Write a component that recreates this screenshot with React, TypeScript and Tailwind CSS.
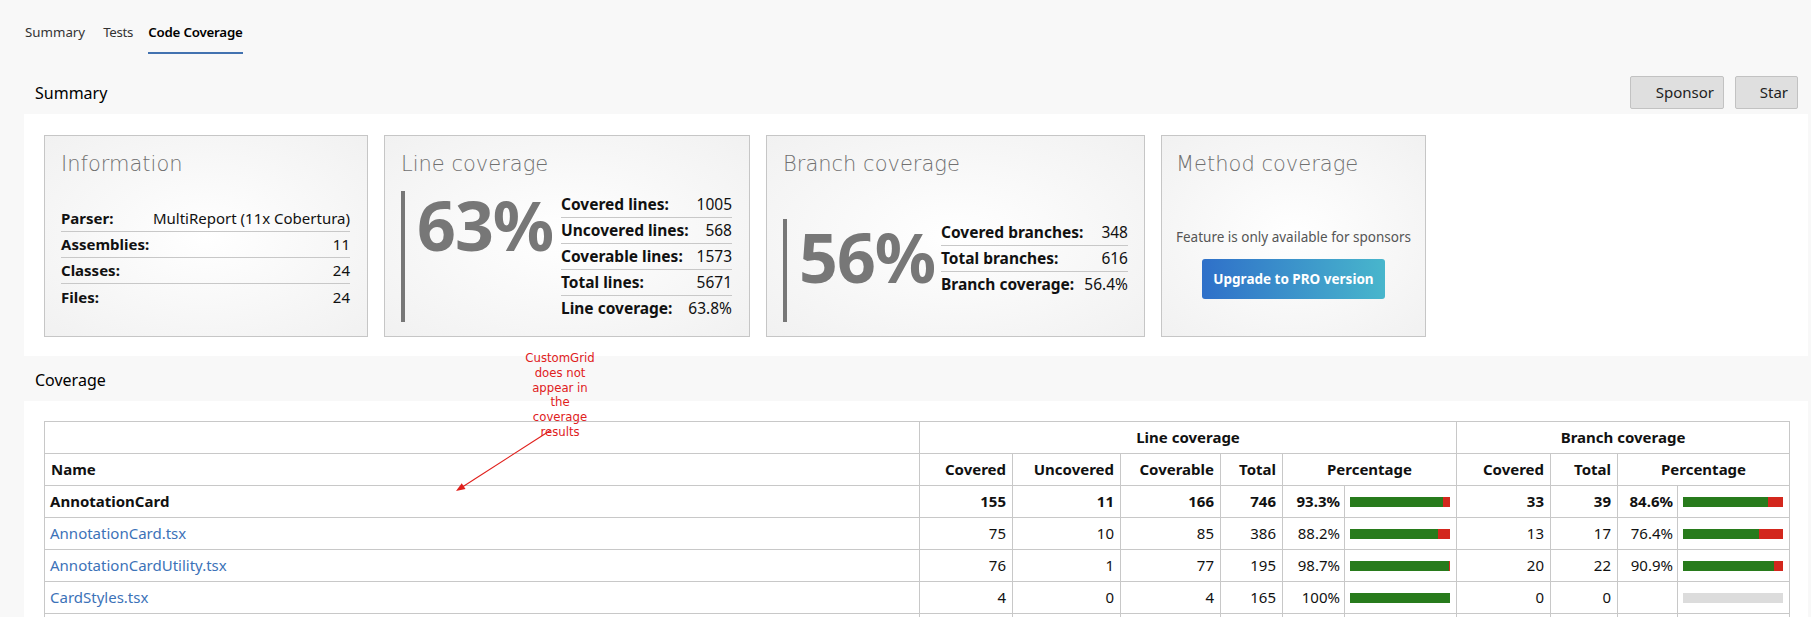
import React from "react";

interface Row {
  name: string;
  bold?: boolean;
  cov: string;
  unc: string;
  cvb: string;
  tot: string;
  pct: string;
  lp: number | null;
  bcov: string;
  btot: string;
  bpct: string;
  bp: number | null;
}

const rows: Row[] = [
  { name: "AnnotationCard", bold: true, cov: "155", unc: "11", cvb: "166", tot: "746", pct: "93.3%", lp: 93.3, bcov: "33", btot: "39", bpct: "84.6%", bp: 84.6 },
  { name: "AnnotationCard.tsx", cov: "75", unc: "10", cvb: "85", tot: "386", pct: "88.2%", lp: 88.2, bcov: "13", btot: "17", bpct: "76.4%", bp: 76.4 },
  { name: "AnnotationCardUtility.tsx", cov: "76", unc: "1", cvb: "77", tot: "195", pct: "98.7%", lp: 98.7, bcov: "20", btot: "22", bpct: "90.9%", bp: 90.9 },
  { name: "CardStyles.tsx", cov: "4", unc: "0", cvb: "4", tot: "165", pct: "100%", lp: 100, bcov: "0", btot: "0", bpct: "", bp: null },
  { name: "", cov: "", unc: "", cvb: "", tot: "", pct: "", lp: null, bcov: "", btot: "", bpct: "", bp: null },
];

// coverage bar: green for covered, red for the rest, grey when there is nothing to measure
function Bar({ value }: { value: number | null }) {
  if (value === null) {
    return <div className="w-[100px] h-[10px] bg-[#dcdcdc]" />;
  }
  return (
    <div className="w-[100px] h-[10px] flex bg-[#d3271d]">
      <div className="h-full bg-[#287b1c]" style={{ width: `${value}%` }} />
    </div>
  );
}

function InfoRow({ label, value, last }: { label: string; value: string; last?: boolean }) {
  return (
    <div className={`flex justify-between items-center h-[26px] ${last ? "" : "border-b border-[#c8c8c8]"}`}>
      <span className="font-bold">{label}</span>
      <span>{value}</span>
    </div>
  );
}

function Card({ title, className, children }: { title: string; className: string; children: React.ReactNode }) {
  return (
    <div
      className={`h-[202px] border border-[#c6c6c6] bg-[radial-gradient(ellipse_at_center,#ffffff_0%,#f1f1f1_100%)] flex flex-col ${className}`}
    >
      <h3 className="font-['DejaVu_Sans',sans-serif] font-extralight text-[21px] leading-[30px] text-[#707070] mt-[13px] whitespace-nowrap">
        {title}
      </h3>
      {children}
    </div>
  );
}

export default function App() {
  const th = "border border-[#c8c8c8] font-bold px-[6px]";
  const td = "border border-[#c8c8c8] px-[6px] text-right";

  return (
    <div className="relative w-full h-[617px] overflow-hidden bg-[#f8f8f8] text-[#111] font-['Noto_Sans','Open_Sans',sans-serif]">
      {/* Tabs */}
      <nav className="flex pl-[25px] text-[13.3px] text-[#333]">
        <span className="pt-[22px] pb-[10px] leading-[20px] border-b-2 border-transparent">Summary</span>
        <span className="ml-[18px] pt-[22px] pb-[10px] leading-[20px] border-b-2 border-transparent tracking-[-0.3px]">Tests</span>
        <span className="ml-[15px] pt-[22px] pb-[10px] leading-[20px] border-b-2 border-[#4272b0] text-black font-semibold tracking-[-0.2px]">
          Code Coverage
        </span>
      </nav>

      {/* Summary header */}
      <div className="flex items-center justify-between h-[33px] mt-[22px] mb-[5px] pl-[35px] pr-[13px]">
        <h2 className="text-[16px] text-black">Summary</h2>
        <div className="flex gap-[11px] text-[15px] text-[#222]">
          <button className="w-[94px] h-[33px] bg-[#dfdfdf] border border-[#c2c2c2] rounded-[2px] text-right pr-[9px]">
            Sponsor
          </button>
          <button className="w-[63px] h-[33px] bg-[#dfdfdf] border border-[#c2c2c2] rounded-[2px] text-right pr-[9px]">
            Star
          </button>
        </div>
      </div>

      {/* Summary cards */}
      <div className="ml-[24px] mr-[3px] bg-white pt-[21px] pb-[19px] pl-[20px] flex gap-[16px] text-[15px]">
        <Card title="Information" className="w-[324px] px-[16px]">
          <div className="mt-[27px] pr-[1px]">
            <InfoRow label="Parser:" value="MultiReport (11x Cobertura)" />
            <InfoRow label="Assemblies:" value="11" />
            <InfoRow label="Classes:" value="24" />
            <InfoRow label="Files:" value="24" last />
          </div>
        </Card>

        <Card title="Line coverage" className="w-[366px] pl-[16px] pr-[17px]">
          <div className="mt-auto mb-[14px] flex border-l-4 border-[#777] min-h-[129px]">
            <div className="pl-[12px] text-[68px] leading-none font-bold text-[#777] tracking-[-1px]">63%</div>
            <div className="ml-auto w-[171px] pt-[1px] text-[15.5px]">
              <InfoRow label="Covered lines:" value="1005" />
              <InfoRow label="Uncovered lines:" value="568" />
              <InfoRow label="Coverable lines:" value="1573" />
              <InfoRow label="Total lines:" value="5671" />
              <InfoRow label="Line coverage:" value="63.8%" last />
            </div>
          </div>
        </Card>

        <Card title="Branch coverage" className="w-[379px] pl-[16px] pr-[16px]">
          <div className="mt-auto mb-[14px] flex border-l-4 border-[#777] min-h-[103px]">
            <div className="pl-[12px] pt-[4px] text-[68px] leading-none font-bold text-[#777] tracking-[-1px]">56%</div>
            <div className="ml-auto w-[187px] pt-[1px] text-[15.5px]">
              <InfoRow label="Covered branches:" value="348" />
              <InfoRow label="Total branches:" value="616" />
              <InfoRow label="Branch coverage:" value="56.4%" last />
            </div>
          </div>
        </Card>

        <Card title="Method coverage" className="w-[265px] px-[14px]">
          <div className="flex flex-col items-center mt-[48px]">
            <p className="text-[13.5px] text-[#555] leading-[20px] whitespace-nowrap">Feature is only available for sponsors</p>
            <button className="mt-[12px] w-[183px] h-[40px] rounded-[3px] bg-[linear-gradient(to_right,#2f70c9,#48b6cc)] text-white font-bold text-[13.5px]">
              Upgrade to PRO version
            </button>
          </div>
        </Card>
      </div>

      {/* Coverage header */}
      <div className="h-[45px] flex items-center pl-[35px] pt-[2px]">
        <h2 className="text-[16px] text-black">Coverage</h2>
      </div>

      {/* Coverage table */}
      <div className="ml-[24px] mr-[3px] bg-white pt-[20px] pl-[20px] pb-[40px] text-[15px]">
        <table className="table-fixed border-collapse w-[1745px]">
          <colgroup>
            <col className="w-[875px]" />
            <col className="w-[93px]" />
            <col className="w-[108px]" />
            <col className="w-[100px]" />
            <col className="w-[62px]" />
            <col className="w-[62px]" />
            <col className="w-[112px]" />
            <col className="w-[94px]" />
            <col className="w-[67px]" />
            <col className="w-[60px]" />
            <col className="w-[112px]" />
          </colgroup>
          <thead>
            <tr className="h-[32px]">
              <th className={th} />
              <th className={`${th} text-center`} colSpan={6}>Line coverage</th>
              <th className={`${th} text-center`} colSpan={4}>Branch coverage</th>
            </tr>
            <tr className="h-[32px]">
              <th className={`${th} text-left`}>Name</th>
              <th className={`${th} text-right`}>Covered</th>
              <th className={`${th} text-right`}>Uncovered</th>
              <th className={`${th} text-right`}>Coverable</th>
              <th className={`${th} text-right`}>Total</th>
              <th className={`${th} text-center`} colSpan={2}>Percentage</th>
              <th className={`${th} text-right`}>Covered</th>
              <th className={`${th} text-right`}>Total</th>
              <th className={`${th} text-center`} colSpan={2}>Percentage</th>
            </tr>
          </thead>
          <tbody>
            {rows.map((r, i) => (
              <tr key={i} className={`h-[32px] ${r.bold ? "font-bold" : ""}`}>
                <td className="border border-[#c8c8c8] px-[5px] text-left">
                  {r.bold ? r.name : <a className="text-[#3c72b8]">{r.name}</a>}
                </td>
                <td className={td}>{r.cov}</td>
                <td className={td}>{r.unc}</td>
                <td className={td}>{r.cvb}</td>
                <td className={td}>{r.tot}</td>
                <td className={`${td} pr-[4px]`}>{r.pct}</td>
                <td className="border border-[#c8c8c8] pl-[5px]">{r.name && <Bar value={r.lp} />}</td>
                <td className={td}>{r.bcov}</td>
                <td className={td}>{r.btot}</td>
                <td className={`${td} pr-[4px]`}>{r.bpct}</td>
                <td className="border border-[#c8c8c8] pl-[5px]">{r.name && <Bar value={r.bp} />}</td>
              </tr>
            ))}
          </tbody>
        </table>
      </div>

      {/* Screenshot annotation */}
      <div className="absolute left-[515px] top-[351px] w-[90px] text-center text-[#e0201c] text-[13px] leading-[14.8px] font-['Liberation_Sans_Narrow','DejaVu_Sans_Condensed',sans-serif]">
        <div>CustomGrid</div>
        <div>does not</div>
        <div>appear in</div>
        <div>the</div>
        <div>coverage</div>
        <div>results</div>
      </div>
      <svg className="absolute left-[450px] top-[425px]" width="110" height="72" viewBox="0 0 110 72">
        <line x1="101" y1="5" x2="10" y2="63.5" stroke="#e0201c" strokeWidth="1.2" />
        <polygon points="6,66 15.5,64 11.7,58.2" fill="#e0201c" />
      </svg>
    </div>
  );
}
